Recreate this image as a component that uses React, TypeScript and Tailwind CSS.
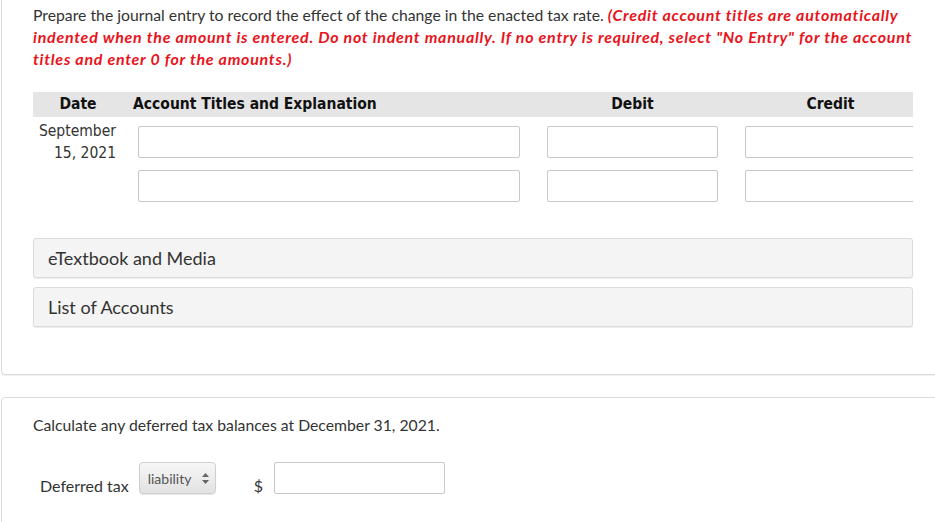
export default function App() {
    const lato = { fontFamily: "Lato, 'Noto Sans', sans-serif" };
    const tahoma = { fontFamily: "'DejaVu Sans Condensed', 'DejaVu Sans', sans-serif" };

    return (
        <div className="w-[935px] h-[522px] overflow-hidden bg-white text-[#333]" style={lato}>
            {/* journal entry card */}
            <div className="ml-[1px] mt-[-10px] w-[960px] border border-[#dcdcdc] rounded-[4px] pt-[13px] pb-[47px] pl-[31px] shadow-[0_1px_1px_rgba(0,0,0,0.06)]">
                <p className="w-[886px] text-[15.75px] leading-[22px]">
                    Prepare the journal entry to record the effect of the change in the enacted tax rate.{" "}
                    <span className="font-bold italic text-[16px] tracking-[0.73px] text-[#e8141b]">
                        (Credit account titles are automatically indented when the amount is entered. Do not indent manually. If no entry is required, select "No Entry" for the account titles and enter 0 for the amounts.)
                    </span>
                </p>

                <div className="mt-[22px] w-[880px] overflow-hidden">
                    <div className="flex w-[883px] h-[25px] items-center bg-[#e5e5e5] text-[15.5px] font-bold text-[#111]" style={tahoma}>
                        <div className="w-[90px] text-center">Date</div>
                        <div className="w-[397px] pl-[10px]">Account Titles and Explanation</div>
                        <div className="ml-[27px] w-[171px] text-center">Debit</div>
                        <div className="ml-[27px] w-[171px] text-center">Credit</div>
                    </div>

                    <div className="mt-[3px] flex items-start w-[883px]">
                        <div className="w-[90px] pr-[7px] text-right text-[15.5px] leading-[22px] text-[#333]" style={tahoma}>
                            September
                            <br />
                            15, 2021
                        </div>
                        <input className="ml-[15px] mt-[6px] w-[382px] h-[32px] border border-[#c8c8c8] rounded-[2px] bg-white" />
                        <input className="ml-[27px] mt-[6px] w-[171px] h-[32px] border border-[#c8c8c8] rounded-[2px] bg-white" />
                        <input className="ml-[27px] mt-[6px] w-[171px] h-[32px] border border-[#c8c8c8] rounded-[2px] bg-white" />
                    </div>
                    <div className="flex items-start w-[883px]">
                        <div className="w-[90px]" />
                        <input className="ml-[15px] mt-[6px] w-[382px] h-[32px] border border-[#c8c8c8] rounded-[2px] bg-white" />
                        <input className="ml-[27px] mt-[6px] w-[171px] h-[32px] border border-[#c8c8c8] rounded-[2px] bg-white" />
                        <input className="ml-[27px] mt-[6px] w-[171px] h-[32px] border border-[#c8c8c8] rounded-[2px] bg-white" />
                    </div>
                </div>

                <div className="mt-[36px] w-[880px] h-[40px] flex items-center pl-[14px] bg-[#f4f4f4] border border-[#dcdcdc] rounded-[3px] shadow-[0_1px_1px_rgba(0,0,0,0.08)] text-[18px] text-[#333]">
                    eTextbook and Media
                </div>
                <div className="mt-[9px] w-[880px] h-[40px] flex items-center pl-[14px] bg-[#f4f4f4] border border-[#dcdcdc] rounded-[3px] shadow-[0_1px_1px_rgba(0,0,0,0.08)] text-[18px] text-[#333]">
                    List of Accounts
                </div>
            </div>

            {/* deferred tax card */}
            <div className="ml-[1px] mt-[22px] w-[960px] h-[200px] border border-[#dcdcdc] rounded-[4px] pt-[16px] pl-[31px]">
                <p className="text-[15.75px] leading-[22px] text-[#333]">Calculate any deferred tax balances at December 31, 2021.</p>

                <div className="mt-[26px] flex items-start">
                    <span className="ml-[7px] mt-[13px] text-[16px] leading-[22px]">Deferred tax</span>
                    <div className="ml-[10px] w-[77px] h-[32px] flex items-start justify-between pt-[5px] pl-[8px] pr-[6px] border border-[#cfcfcf] rounded-[4px] bg-gradient-to-b from-[#f7f7f7] to-[#e2e2e2] shadow-[0_1px_1px_rgba(0,0,0,0.1)] text-[14px] text-[#555]">
                        <span>liability</span>
                        <svg width="7" height="11" viewBox="0 0 7 11" className="mt-[5px]">
                            <path d="M3.5 0 L7 4 L0 4 Z" fill="#666" />
                            <path d="M3.5 11 L7 7 L0 7 Z" fill="#666" />
                        </svg>
                    </div>
                    <span className="ml-[38px] mt-[13px] text-[16px] leading-[22px]">$</span>
                    <input className="ml-[11px] w-[171px] h-[32px] border border-[#c8c8c8] rounded-[2px] bg-white" />
                </div>
            </div>
        </div>
    );
}
